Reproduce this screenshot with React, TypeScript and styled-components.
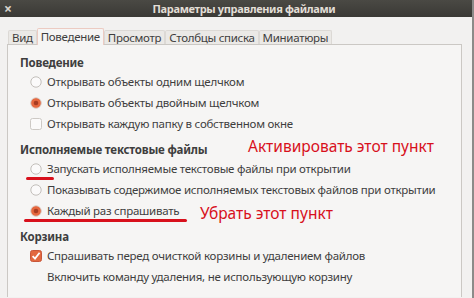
import React from "react";
import styled, { createGlobalStyle } from "styled-components";

const GlobalStyle = createGlobalStyle`
  html, body {
    margin: 0;
    padding: 0;
    background: #f2f1f0;
  }
  * {
    box-sizing: border-box;
  }
`;

const tabs = ["Вид", "Поведение", "Просмотр", "Столбцы списка", "Миниатюры"];

const Radio = ({ checked }: { checked?: boolean }) => (
  <Mark width="12" height="12" viewBox="0 0 12 12">
    {checked ? (
      <>
        <circle cx="6" cy="6" r="5.3" fill="#e6683f" stroke="#d8cfc9" strokeWidth="0.9" />
        <circle cx="6" cy="6" r="2.3" fill="#a83c22" />
      </>
    ) : (
      <circle cx="6" cy="6" r="5.2" fill="#fbfafa" stroke="#bcb8b3" strokeWidth="0.9" />
    )}
  </Mark>
);

const Check = ({ checked }: { checked?: boolean }) => (
  <Mark width="12" height="12" viewBox="0 0 12 12">
    {checked ? (
      <>
        <rect x="0.5" y="0.5" width="11" height="11" rx="2" fill="#e2683f" stroke="#c9573a" />
        <path d="M2.6 6.2 L5 8.6 L9.6 2.8" fill="none" stroke="#fff" strokeWidth="1.8" />
      </>
    ) : (
      <rect x="0.5" y="0.5" width="11" height="11" rx="2" fill="#fbfafa" stroke="#cdc9c5" />
    )}
  </Mark>
);

const App = () => {
  return (
    <Window>
      <GlobalStyle />
      <TitleBar>
        <Close>×</Close>
        <Title>Параметры управления файлами</Title>
      </TitleBar>

      <Body>
        <TabBar>
          {tabs.map((t, i) => (
            <Tab key={t} $active={i === 1}>
              {t}
            </Tab>
          ))}
        </TabBar>

        <Panel>
          <Section>
            <Heading>Поведение</Heading>
            <Row>
              <Radio />
              Открывать объекты одним щелчком
            </Row>
            <Row>
              <Radio checked />
              Открывать объекты двойным щелчком
            </Row>
            <Row>
              <Check />
              Открывать каждую папку в собственном окне
            </Row>
          </Section>

          <Section>
            <Heading>Исполняемые текстовые файлы</Heading>
            <Row>
              <Radio />
              Запускать исполняемые текстовые файлы при открытии
            </Row>
            <Row>
              <Radio />
              Показывать содержимое исполняемых текстовых файлов при открытии
            </Row>
            <Row>
              <Radio checked />
              Каждый раз спрашивать
            </Row>
          </Section>

          <Section>
            <Heading>Корзина</Heading>
            <Row>
              <Check checked />
              Спрашивать перед очисткой корзины и удалением файлов
            </Row>
            <Row>
              <Blank />
              Включить команду удаления, не использующую корзину
            </Row>
          </Section>

          <Note $x={240} $y={90}>Активировать этот пункт</Note>
          <Note $x={192} $y={157}>Убрать этот пункт</Note>
          <Underline $x={18} $y={132} $w={28} />
          <Underline $x={16} $y={174} $w={163} />
        </Panel>
      </Body>
    </Window>
  );
};

const Window = styled.div`
  width: 474px;
  height: 298px;
  display: flex;
  flex-direction: column;
  background: #f2f1f0;
  border-right: 2px solid #8c8b89;
  font-family: "Noto Sans", "DejaVu Sans", sans-serif;
  color: #3e3e3e;
  overflow: hidden;
`;

const TitleBar = styled.div`
  height: 17px;
  display: flex;
  align-items: center;
  background: linear-gradient(#4a4944, #3a3935);
  color: #e2ded6;
`;

const Close = styled.span`
  width: 16px;
  padding-left: 4px;
  font-size: 14px;
  font-weight: 700;
  line-height: 17px;
  color: #d8d4cc;
`;

const Title = styled.div`
  flex: 1;
  text-align: center;
  font-size: 11px;
  font-weight: 700;
  letter-spacing: -0.35px;
  line-height: 17px;
`;

const Body = styled.div`
  flex: 1;
  display: flex;
  flex-direction: column;
  padding: 10px 10px 1px 7px;
`;

const TabBar = styled.div`
  display: flex;
  align-items: flex-end;
  height: 17px;
  padding-left: 1px;
`;

const Tab = styled.div<{ $active?: boolean }>`
  height: ${(p) => (p.$active ? "17px" : "15px")};
  padding: 0 3px;
  margin-bottom: -1px;
  font-size: 11.5px;
  letter-spacing: -0.3px;
  line-height: ${(p) => (p.$active ? "16px" : "14px")};
  white-space: nowrap;
  background: ${(p) => (p.$active ? "#f6f5f4" : "#ebe9e6")};
  border: 1px solid ${(p) => (p.$active ? "#eccbc2" : "#dcd9d5")};
  border-bottom: ${(p) => (p.$active ? "none" : "1px solid #c9c6c2")};
  border-radius: 2px 2px 0 0;
  position: relative;
  z-index: ${(p) => (p.$active ? 1 : 0)};
`;

const Panel = styled.div`
  position: relative;
  flex: 1;
  display: flex;
  flex-direction: column;
  gap: 8px;
  padding: 10px 0 0 12px;
  background: #f6f5f4;
  border: 1px solid #cbc8c4;
  border-bottom: none;
`;

const Section = styled.div`
  display: flex;
  flex-direction: column;
`;

const Heading = styled.div`
  height: 16px;
  font-size: 11.5px;
  font-weight: 700;
  letter-spacing: -0.2px;
  line-height: 16px;
`;

const Row = styled.div`
  height: 21px;
  display: flex;
  align-items: center;
  gap: 5px;
  padding-left: 10px;
  font-size: 11.5px;
  letter-spacing: -0.25px;
  white-space: nowrap;
`;

const Mark = styled.svg`
  flex-shrink: 0;
`;

const Blank = styled.span`
  flex-shrink: 0;
  width: 12px;
  height: 12px;
`;

const Note = styled.div<{ $x: number; $y: number }>`
  position: absolute;
  left: ${(p) => p.$x}px;
  top: ${(p) => p.$y}px;
  font-size: 15.5px;
  color: #d8101c;
  white-space: nowrap;
`;

const Underline = styled.div<{ $x: number; $y: number; $w: number }>`
  position: absolute;
  left: ${(p) => p.$x}px;
  top: ${(p) => p.$y}px;
  width: ${(p) => p.$w}px;
  height: 3px;
  border-radius: 2px;
  background: #d8101c;
`;

export default App;
